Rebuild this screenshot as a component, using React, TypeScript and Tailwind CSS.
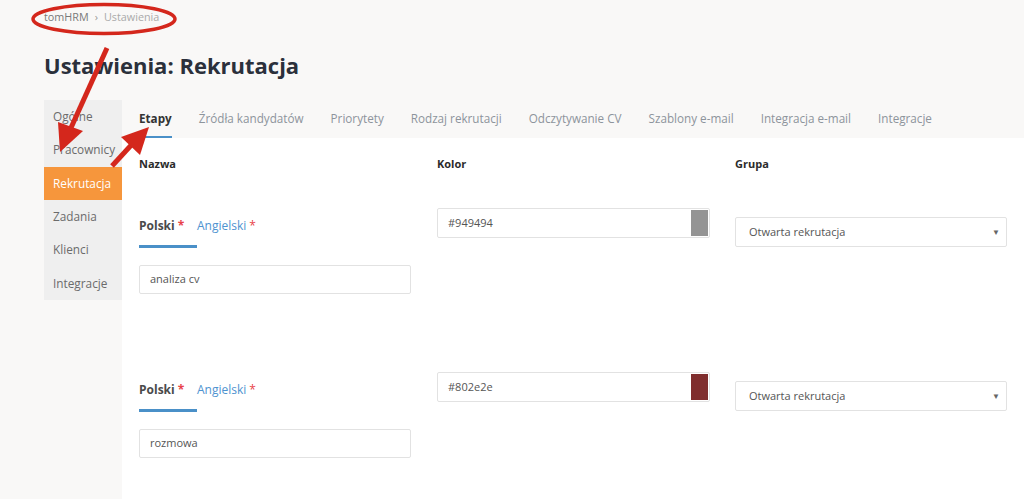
import React from "react";

const sideItems = ["Ogólne", "Pracownicy", "Rekrutacja", "Zadania", "Klienci", "Integracje"];
const tabs = [
  "Etapy",
  "Źródła kandydatów",
  "Priorytety",
  "Rodzaj rekrutacji",
  "Odczytywanie CV",
  "Szablony e-mail",
  "Integracja e-mail",
  "Integracje",
];

const stages = [
  { name: "analiza cv", color: "#949494", group: "Otwarta rekrutacja" },
  { name: "rozmowa", color: "#802e2e", group: "Otwarta rekrutacja" },
];

const Star = () => <span className="text-[#e8434a] ml-[3px]">*</span>;

const StageRow = ({ stage }: { stage: (typeof stages)[number] }) => (
  <div className="grid grid-cols-[298px_298px_289px] h-[164px]">
    {/* Nazwa */}
    <div className="pt-[27px]">
      <div className="flex text-[12px] h-[31px]">
        <div className="w-[58px] border-b-[3px] border-[#4a90c8] font-bold text-[#4a4a4a] leading-[17px]">
          Polski<Star />
        </div>
        <div className="text-[#4e93d0] leading-[17px]">
          Angielski<Star />
        </div>
      </div>
      <div className="mt-[17px] w-[272px] h-[29px] border border-[#e2e2e2] rounded-[2px] bg-white flex items-center px-[10px] text-[11px] text-[#555]">
        {stage.name}
      </div>
    </div>
    {/* Kolor */}
    <div className="pt-[18px]">
      <div className="w-[273px] h-[30px] border border-[#e2e2e2] rounded-[2px] bg-white flex items-stretch text-[11px] text-[#555]">
        <div className="flex-1 flex items-center px-[10px]">{stage.color}</div>
        <div className="w-[17px] my-[1px] mr-[1px]" style={{ backgroundColor: stage.color }} />
      </div>
    </div>
    {/* Grupa */}
    <div className="pt-[27px]">
      <div className="w-[272px] h-[30px] border border-[#e2e2e2] rounded-[2px] bg-white flex items-center justify-between pl-[13px] pr-[6px] text-[11px] text-[#555]">
        <span>{stage.group}</span>
        <span className="text-[8px] text-[#666]">▼</span>
      </div>
    </div>
  </div>
);

const Annotations = () => (
  <svg className="absolute inset-0 pointer-events-none" width="1024" height="499" viewBox="0 0 1024 499">
    <ellipse cx="104" cy="19" rx="71" ry="14.5" fill="none" stroke="#d4271c" strokeWidth="3.5" />
    {/* arrow down to Pracownicy */}
    <line x1="107" y1="48" x2="70" y2="130" stroke="#d4271c" strokeWidth="5" />
    <polygon points="60,152 58,122 83,131" fill="#d4271c" />
    {/* arrow up to Etapy */}
    <line x1="112" y1="166" x2="135" y2="141" stroke="#d4271c" strokeWidth="5" />
    <polygon points="149,127 121,137 140,155" fill="#d4271c" />
  </svg>
);

const App = () => {
  return (
    <div
      className="relative w-[1024px] h-[499px] overflow-hidden bg-[#f9f8f7]"
      style={{ fontFamily: '"Open Sans", "Liberation Sans", sans-serif' }}
    >
      {/* Breadcrumb */}
      <div className="pl-[44px] pt-[9px] h-[44px] text-[10.8px] leading-[16px] flex gap-[6px]">
        <span className="text-[#7a7a7a]">tomHRM</span>
        <span className="text-[#999]">›</span>
        <span className="text-[#aaa]">Ustawienia</span>
      </div>

      {/* Title */}
      <h1 className="pl-[44px] h-[56px] pt-[6px] text-[22px] font-bold text-[#2b303b] leading-[30px]">
        Ustawienia: Rekrutacja
      </h1>

      <div className="flex pl-[44px] h-[399px]">
        {/* Sidebar */}
        <div className="w-[78px] self-start bg-[#efefef]">
          {sideItems.map((item) => (
            <div
              key={item}
              className={
                item === "Rekrutacja"
                  ? "h-[33.4px] flex items-center pl-[9px] text-[11.8px] text-white bg-[#f6963c]"
                  : "h-[33.4px] flex items-center pl-[9px] text-[11.8px] text-[#6b6b6b]"
              }
            >
              {item}
            </div>
          ))}
        </div>

        {/* Main */}
        <div className="flex-1 flex flex-col min-h-0">
          <div className="h-[38px] shrink-0 flex gap-[27px] pl-[17px] text-[11.7px]">
            {tabs.map((t, i) => (
              <div
                key={t}
                className={
                  i === 0
                    ? "flex items-center border-b-2 border-[#4a90c8] font-bold text-[#333] pt-[1px]"
                    : "flex items-center text-[#8d949c] pb-[1px]"
                }
              >
                {t}
              </div>
            ))}
          </div>

          <div className="flex-1 min-h-0 overflow-hidden bg-white pl-[17px]">
            <div className="grid grid-cols-[298px_298px_289px] h-[52px] items-center text-[11px] font-bold text-[#2b2b2b]">
              <div>Nazwa</div>
              <div>Kolor</div>
              <div>Grupa</div>
            </div>
            {stages.map((s) => (
              <StageRow key={s.name} stage={s} />
            ))}
          </div>
        </div>
      </div>

      <Annotations />
    </div>
  );
};

export default App;
